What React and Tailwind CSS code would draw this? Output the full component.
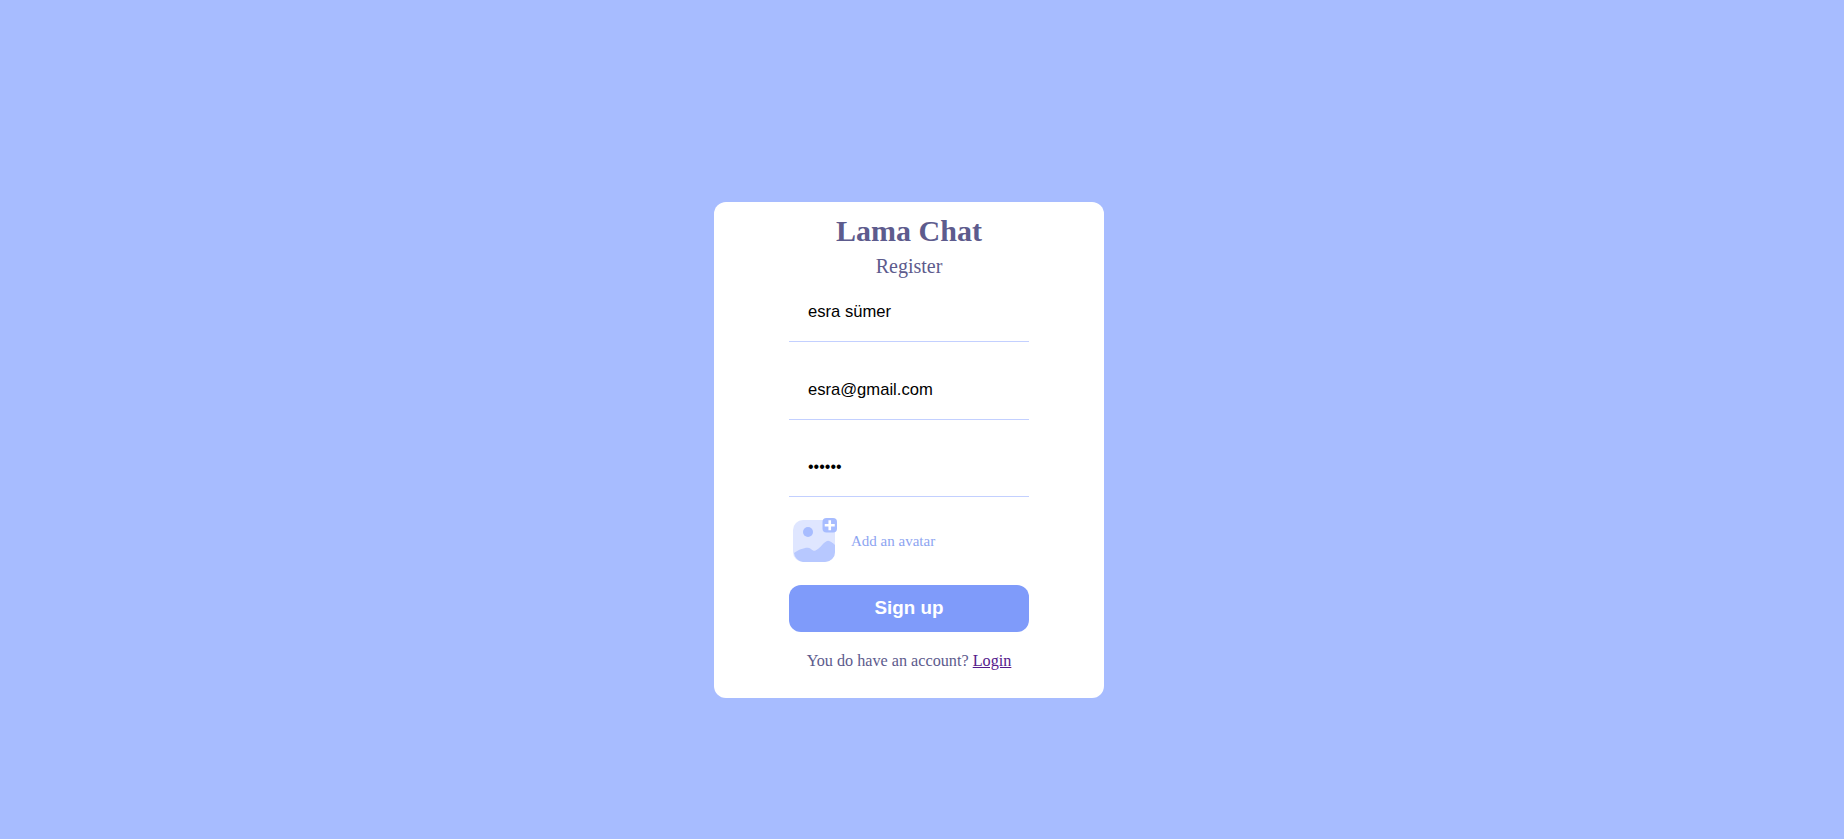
import React from 'react';

const inputClass =
  "block w-full px-[19px] border-0 border-b border-[#c3d0ff] outline-none text-[16.6px] text-black font-['Liberation_Sans',Arial,sans-serif] bg-white";

const App = () => {
  return (
    <div className="h-screen overflow-hidden bg-[#a7bcff] flex justify-center items-start pt-[202px] pr-[26px] font-['Liberation_Serif','Times_New_Roman',serif]">
      <div className="w-[390px] h-[496px] bg-white rounded-[12px] flex flex-col items-center">
        <h1 className="mt-[12px] text-[30px] leading-[34px] font-bold text-[#5d5b8d]">Lama Chat</h1>
        <p className="mt-[7px] text-[20px] leading-[23px] text-[#5d5b8d]">Register</p>
        <form className="w-[240px] flex flex-col">
          <input className={`${inputClass} h-[64px] pt-[4px]`} type="text" defaultValue="esra sümer" />
          <input className={`${inputClass} h-[63px] mt-[15px] pt-[3px]`} type="email" defaultValue="esra@gmail.com" />
          <input className={`${inputClass} h-[62px] mt-[15px] pt-[2px] !text-[16px]`} type="password" defaultValue="123456" />
          <label className="flex items-center h-[88px] pl-[4px] gap-[14px] cursor-pointer">
            <svg width="44" height="44" viewBox="0 0 44 44" className="shrink-0 -mt-[2px]">
              <rect x="0" y="2" width="42" height="42" rx="10" fill="#dfe6ff" />
              <circle cx="15" cy="14" r="5" fill="#a7bcff" />
              <path d="M1 35 C5 32 11 29.5 15 29.7 C18 30 19 33 22 32.7 C27 31 31 23 35 22.7 C38 23 41 26 42 27 V34 A10 10 0 0 1 32 44 H10 A10 10 0 0 1 1 35 Z" fill="#b7c8ff" />
              <rect x="29.5" y="0" width="14.5" height="14.5" rx="4" fill="#a7bcff" />
              <path d="M36.75 2.25 V12.25 M31.75 7.25 H41.75" stroke="#ffffff" strokeWidth="2.6" />
            </svg>
            <span className="text-[15px] text-[#8da4f1]">Add an avatar</span>
          </label>
          <button type="button" className="w-full h-[47px] rounded-[12px] bg-[#7f9bfa] text-white text-[18.8px] font-bold font-['Liberation_Sans',Arial,sans-serif]">
            Sign up
          </button>
        </form>
        <p className="mt-[17px] text-[16.2px] text-[#5d5b8d]">
          You do have an account? <a href="#" className="underline text-[#551a8b]">Login</a>
        </p>
      </div>
    </div>
  );
};

export default App;
